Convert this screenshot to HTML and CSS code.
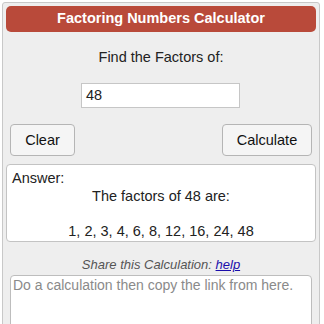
FILE: index.html
```html
<!DOCTYPE html>
<html>
<head>
<meta charset="utf-8">
<link rel="stylesheet" href="styles.css">
</head>
<body>
<div class="calc">
  <div class="header">Factoring Numbers Calculator</div>
  <div class="label">Find the Factors of:</div>
  <div class="input-row"><div class="input">48</div></div>
  <div class="buttons">
    <div class="btn btn-clear">Clear</div>
    <div class="btn btn-calc">Calculate</div>
  </div>
  <div class="answer">
    <div class="answer-label">Answer:</div>
    <div class="answer-line">The factors of 48 are:</div>
    <div class="answer-list">1, 2, 3, 4, 6, 8, 12, 16, 24, 48</div>
  </div>
  <div class="share">Share this Calculation: <a class="help" href="#">help</a></div>
  <div class="textarea">Do a calculation then copy the link from here.</div>
</div>
</body>
</html>
```
FILE: styles.css
```css
html, body {
  margin: 0;
  padding: 0;
  background: #fff;
  font-family: "Liberation Sans", Arial, sans-serif;
  color: #222;
}
body {
  height: 324px;
  overflow: hidden;
}
.calc {
  margin: 2px 0 0 2px;
  width: 310px;
  height: 330px;
  border: 1px solid #c8c8c8;
  border-radius: 3px;
  background: #eeeeee;
  padding: 3px;
}
.header {
  background: #b94a3a;
  color: #fff;
  font-weight: bold;
  font-size: 14.5px;
  text-align: center;
  height: 26px;
  line-height: 25px;
  border-radius: 5px;
}
.label {
  text-align: center;
  font-size: 14.5px;
  margin-top: 16px;
  line-height: 18px;
}
.input-row {
  display: flex;
  justify-content: center;
  margin-top: 17px;
}
.input {
  width: 153px;
  height: 23px;
  border: 1px solid #c6c6c6;
  background: #fff;
  font-size: 14.5px;
  line-height: 23px;
  padding-left: 4px;
  margin-left: -1px;
}
.buttons {
  display: flex;
  justify-content: space-between;
  margin-top: 16px;
  padding: 0 4px 0 4px;
}
.btn {
  height: 30px;
  border: 1px solid #b5b5b5;
  border-radius: 4px;
  background: #f5f5f5;
  font-size: 14.5px;
  line-height: 30px;
  text-align: center;
  color: #111;
}
.btn-clear { width: 63px; }
.btn-calc { width: 88px; }
.answer {
  margin-top: 8px;
  height: 76px;
  border: 1px solid #c3c3c3;
  border-radius: 4px;
  background: #fff;
  padding: 0 5px;
  font-size: 14.5px;
}
.answer-label {
  line-height: 17px;
  margin-top: 5px;
}
.answer-line {
  text-align: center;
  line-height: 17px;
  margin-top: 1px;
}
.answer-list {
  text-align: center;
  line-height: 17px;
  margin-top: 18px;
}
.share {
  text-align: center;
  font-style: italic;
  font-size: 13px;
  color: #555;
  margin-top: 15px;
  line-height: 16px;
}
.help {
  color: #1a0dab;
  text-decoration: underline;
}
.textarea {
  margin: 2px 4px 0 4px;
  height: 60px;
  border: 1px solid #bdbdbd;
  border-radius: 4px;
  background: #fff;
  color: #8a8a8a;
  font-size: 14px;
  line-height: 16px;
  padding: 1px 2px;
}
```
